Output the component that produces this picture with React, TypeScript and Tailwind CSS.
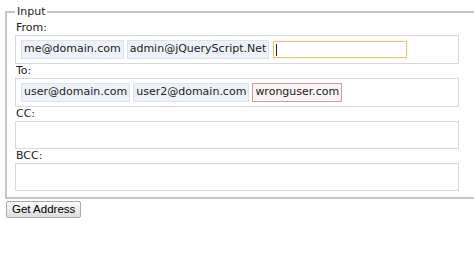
const FONT = "font-['DejaVu_Sans',Verdana,sans-serif]";

type Tag = { email: string; invalid?: boolean };

const FROM: Tag[] = [{ email: 'me@domain.com' }, { email: 'admin@jQueryScript.Net' }];
const TO: Tag[] = [
  { email: 'user@domain.com' },
  { email: 'user2@domain.com' },
  { email: 'wronguser.com', invalid: true },
];

function TagChip({ tag }: { tag: Tag }) {
  return (
    <span
      className={
        tag.invalid
          ? 'mr-[3px] inline-flex h-[19px] items-center border border-[#c99d9d] bg-[#f9f3f3] px-[2px] text-[#222]'
          : 'mr-[3px] inline-flex h-[19px] items-center border border-[#dce3ee] bg-[#eef2f8] px-[2px] text-[#222]'
      }
    >
      {tag.email}
    </span>
  );
}

function AddressBox({ tags, withInput }: { tags: Tag[]; withInput?: boolean }) {
  return (
    <div className="flex h-[29px] w-[444px] items-center border border-[#d9d9d9] bg-white pl-[5px]">
      {tags.map((t) => (
        <TagChip key={t.email} tag={t} />
      ))}
      {withInput && (
        <div className="ml-[1px] flex h-[17px] w-[134px] items-center border border-[#e3c57f] bg-white pl-[2px] shadow-[0_0_2px_#f3e2b8]">
          <span className="h-[12px] w-[1px] bg-[#222]" />
        </div>
      )}
    </div>
  );
}

function Label({ children }: { children: string }) {
  return <div className="h-[14px] pl-[1px] leading-[14px] text-[#222]">{children}</div>;
}

export default function App() {
  return (
    <div className={`h-[253px] w-[474px] overflow-hidden bg-white pt-[5px] text-[11px] ${FONT}`}>
      <fieldset className="ml-[5px] w-[500px] border-2 border-[#c6c6c6] px-[8px] pt-[2px] pb-[6px]">
        <legend className="px-[2px] leading-[14px] text-[#222]">Input</legend>
        <Label>From:</Label>
        <AddressBox tags={FROM} withInput />
        <Label>To:</Label>
        <AddressBox tags={TO} />
        <Label>CC:</Label>
        <div className="h-[28px] w-[444px] border border-[#d9d9d9] bg-white" />
        <Label>BCC:</Label>
        <div className="h-[28px] w-[444px] border border-[#d9d9d9] bg-white" />
      </fieldset>
      <button
        type="button"
        className="mt-[2px] ml-[6px] h-[17px] rounded-[2px] border border-[#a9a9a9] bg-gradient-to-b from-[#fbfbfb] to-[#dcdcdc] px-[5px] font-['Liberation_Sans',Arial,sans-serif] text-[11.5px] leading-[15px] text-black"
      >
        Get Address
      </button>
    </div>
  );
}
